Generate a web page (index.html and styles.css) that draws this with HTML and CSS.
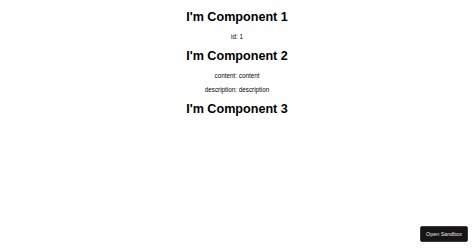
FILE: index.html
```html
<!DOCTYPE html>
<html>
<head>
<meta charset="utf-8">
<link rel="stylesheet" href="styles.css">
</head>
<body>
<div class="app">
  <h1 class="title">I'm Component 1</h1>
  <p class="field">id: 1</p>
  <h1 class="title">I'm Component 2</h1>
  <p class="field">content: content</p>
  <p class="field">description: description</p>
  <h1 class="title">I'm Component 3</h1>
</div>
<a class="sandbox-btn">Open Sandbox</a>
</body>
</html>
```
FILE: styles.css
```css
html, body {
  background: #ffffff;
}
body {
  margin: 3.2px;
  font-family: "Liberation Sans", Arial, sans-serif;
  color: #000;
}
.app {
  text-align: center;
}
.title {
  font-size: 12.6px;
  font-weight: bold;
  margin: 8.7px 0;
  line-height: 1.15;
}
.title:first-child {
  margin-top: 6.4px;
}
.field {
  font-size: 6.3px;
  margin: 6.8px 0;
  line-height: 1.15;
}
.sandbox-btn {
  position: fixed;
  right: 6px;
  bottom: 6px;
  background: #151515;
  color: #e6e6e6;
  font-family: "Liberation Sans", Arial, sans-serif;
  font-size: 5.4px;
  padding: 3.8px 5px;
  border-radius: 2px;
  border: 0.5px solid #3a3a3a;
  line-height: 1.2;
}
```
